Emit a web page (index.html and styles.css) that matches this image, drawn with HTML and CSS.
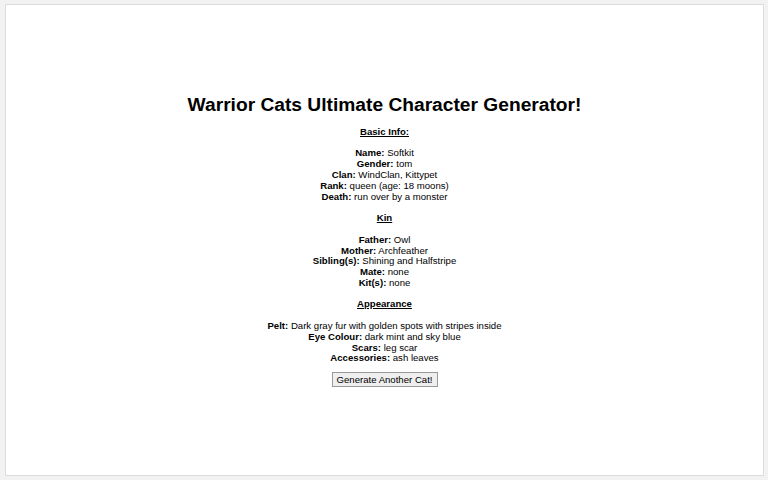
FILE: index.html
```html
<!DOCTYPE html>
<html lang="en">
  <head>
    <meta charset="UTF-8" />
    <meta name="viewport" content="width=device-width, initial-scale=1.0" />
    <title>Warrior Cats Generator</title>
    <link rel="stylesheet" href="styles.css">
  </head>
  <body>
    <div id="container">
      <div class="generator">
        <h1>Warrior Cats Ultimate Character Generator!</h1>
        <div class="cat-info">
          <span class="section-title">Basic Info:</span><br /><br />
          <b>Name:</b> Softkit<br />
          <b>Gender:</b> tom<br />
          <b>Clan:</b> WindClan, Kittypet<br />
          <b>Rank:</b> queen (age: 18 moons)<br />
          <b>Death:</b> run over by a monster<br /><br />

          <span class="section-title">Kin</span><br /><br />
          <b>Father:</b> Owl<br />
          <b>Mother:</b> Archfeather<br />
          <b>Sibling(s):</b> Shining and Halfstripe<br />
          <b>Mate:</b> none<br />
          <b>Kit(s):</b> none<br /><br />

          <span class="section-title">Appearance</span><br /><br />
          <b>Pelt:</b> Dark gray fur with golden spots with stripes inside<br />
          <b>Eye Colour:</b> dark mint and sky blue<br />
          <b>Scars:</b> leg scar<br />
          <b>Accessories:</b> ash leaves
        </div>
        <button type="button" class="gen-btn">Generate Another Cat!</button>
      </div>
    </div>
  </body>
</html>
```

FILE: styles.css
```css
* {
  box-sizing: border-box;
  margin: 0;
  padding: 0;
}
body {
  font-family: "Liberation Sans", Arial, Helvetica, sans-serif;
  background-color: #f2f2f2;
  padding: 4px 4px 4px 5px;
  height: 100vh;
}
#container {
  background-color: #fff;
  border: 1px solid #dcdcdc;
  height: 100%;
  display: flex;
  justify-content: center;
  align-items: center;
}
.generator {
  text-align: center;
  color: #000;
}
h1 {
  font-size: 19.2px;
  font-weight: bold;
  line-height: 23px;
  margin-bottom: 11px;
}
.cat-info {
  font-size: 9.6px;
  line-height: 10.8px;
}
.section-title {
  font-weight: bold;
  text-decoration: underline;
}
.gen-btn {
  margin-top: 8px;
  font-family: "Liberation Sans", Arial, sans-serif;
  font-size: 9.6px;
  padding: 1px 4px;
  background-color: #efefef;
  border: 1px solid #999;
  border-radius: 0;
  color: #000;
}
```
